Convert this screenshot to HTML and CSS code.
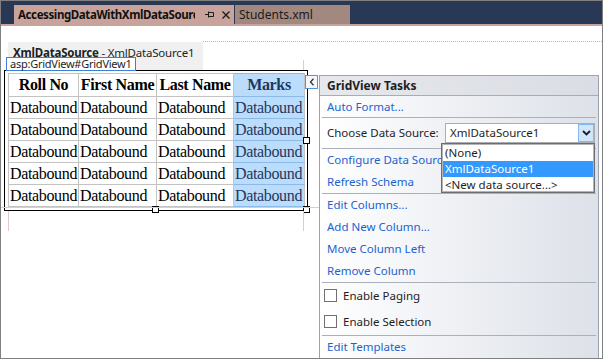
FILE: index.html
```html
<!DOCTYPE html>
<html>
<head>
<meta charset="utf-8">
<link rel="stylesheet" href="styles.css">
</head>
<body>
<div class="window">
  <div class="tabbar">
    <div class="tab tab-active">
      <span class="tab-title">AccessingDataWithXmlDataSource.aspx</span>
      <svg class="pin" width="9" height="7" viewBox="0 0 9 7"><path d="M0 3.5H3M3.5 0.5V6.5M3.5 1.5H8.5V5.5H3.5" fill="none" stroke="#1e1e1e" stroke-width="1"/></svg>
      <svg class="close" width="8" height="8" viewBox="0 0 8 8"><path d="M0.5 0.5L7.5 7.5M7.5 0.5L0.5 7.5" stroke="#1e1e1e" stroke-width="1.4"/></svg>
    </div>
    <div class="tab tab-inactive"><span>Students.xml</span></div>
  </div>
  <div class="tabline"></div>
  <div class="surface">
    <div class="dsrow">
      <div class="dsbox"><b>XmlDataSource</b> - XmlDataSource1</div>
      <div class="dsfill"></div>
    </div>
    <div class="gridframe">
      <table class="grid">
        <colgroup><col class="c1"><col class="c2"><col class="c3"><col class="c4"></colgroup>
        <tr class="head"><th>Roll No</th><th>First Name</th><th>Last Name</th><th class="sel">Marks</th></tr>
        <tr><td>Databound</td><td>Databound</td><td>Databound</td><td class="sel">Databound</td></tr>
        <tr><td>Databound</td><td>Databound</td><td>Databound</td><td class="sel">Databound</td></tr>
        <tr><td>Databound</td><td>Databound</td><td>Databound</td><td class="sel">Databound</td></tr>
        <tr><td>Databound</td><td>Databound</td><td>Databound</td><td class="sel">Databound</td></tr>
        <tr><td>Databound</td><td>Databound</td><td>Databound</td><td class="sel">Databound</td></tr>
      </table>
      <span class="handle h-bm"></span>
      <span class="handle h-br"></span>
      <span class="handle h-mr"></span>
    </div>
  </div>

  <div class="guide gh"></div>
  <div class="guide gv1"></div>
  <div class="guide gv2"></div>
  <div class="guide gv3"></div>

  <div class="gvlabel">asp:GridView#GridView1</div>

  <div class="smarttag">
    <svg width="6" height="8" viewBox="0 0 6 8"><path d="M4.5 0.8L1.5 4L4.5 7.2" fill="none" stroke="#333" stroke-width="1.3"/></svg>
  </div>

  <div class="tasks">
    <div class="tasks-head">GridView Tasks</div>
    <div class="row link">Auto Format...</div>
    <div class="sep"></div>
    <div class="row choose">
      <span>Choose Data Source:</span>
      <div class="combo">
        <span class="combo-text">XmlDataSource1</span>
        <span class="combo-btn"><svg width="9" height="6" viewBox="0 0 9 6"><path d="M1 1L4.5 4.5L8 1" fill="none" stroke="#1e1e1e" stroke-width="1.8"/></svg></span>
      </div>
    </div>
    <div class="sep"></div>
    <div class="row link">Configure Data Source...</div>
    <div class="row link">Refresh Schema</div>
    <div class="sep"></div>
    <div class="row link">Edit Columns...</div>
    <div class="row link">Add New Column...</div>
    <div class="row link">Move Column Left</div>
    <div class="row link">Remove Column</div>
    <div class="sep"></div>
    <div class="row check"><span class="box"></span>Enable Paging</div>
    <div class="row check"><span class="box"></span>Enable Selection</div>
    <div class="sep"></div>
    <div class="row link">Edit Templates</div>
  </div>

  <div class="ddlist">
    <div class="dd-item">(None)</div>
    <div class="dd-item dd-sel">XmlDataSource1</div>
    <div class="dd-item">&lt;New data source...&gt;</div>
  </div>
</div>
</body>
</html>
```
FILE: styles.css
```css
html, body {
  margin: 0;
  padding: 0;
  background: #fff;
}

.window {
  width: 603px;
  height: 359px;
  box-sizing: border-box;
  border: 1px solid #808080;
  position: relative;
  overflow: hidden;
  background: #fff;
  font-family: "Noto Sans", "Open Sans", sans-serif;
  font-size: 11.5px;
  color: #1e1e1e;
  display: flex;
  flex-direction: column;
}

/* ---------- tabs ---------- */
.tabbar {
  height: 23px;
  flex: none;
  background: #293955;
  display: flex;
  align-items: flex-end;
  padding-left: 13px;
  gap: 1px;
}

.tab {
  height: 19px;
  box-sizing: border-box;
  display: flex;
  align-items: center;
  padding-left: 4px;
  white-space: nowrap;
  font-size: 12px;
}

.tab-active {
  width: 220px;
  background: #c8a39b;
}

.tab-title {
  width: 177px;
  flex: none;
  overflow: hidden;
  font-weight: bold;
  font-size: 11.5px;
  letter-spacing: -0.4px;
  color: #111;
}

.pin {
  margin-left: 10px;
  flex: none;
}

.close {
  margin-left: 8px;
  flex: none;
}

.tab-inactive {
  width: 115px;
  background: #a2887f;
  color: #1b1b1b;
}

.tabline {
  height: 2px;
  flex: none;
  background: #c8a39b;
}

/* ---------- design surface ---------- */
.surface {
  flex: 1;
}

.dsrow {
  display: flex;
  align-items: flex-start;
  margin-top: 15px;
}

.dsbox {
  width: 195px;
  height: 28px;
  box-sizing: border-box;
  margin-left: 7px;
  margin-top: 1px;
  background: #f0f0f0;
  padding: 3px 0 0 5px;
  line-height: 16px;
  font-size: 11.5px;
  letter-spacing: -0.2px;
  white-space: nowrap;
  overflow: hidden;
}

.dsfill {
  flex: 1;
  border-top: 1px dotted #b8b8b8;
}

.gridframe {
  position: relative;
  width: 304px;
  box-sizing: border-box;
  margin-left: 3px;
  border: 1px solid #000;
  padding: 2px 3px 3px 3px;
}

.grid {
  border-collapse: collapse;
  table-layout: fixed;
  width: 296px;
  font-family: "Liberation Serif", "Times New Roman", serif;
  font-size: 16px;
  letter-spacing: -0.35px;
  color: #000;
}

.grid col.c1 { width: 70px; }
.grid col.c2 { width: 78px; }
.grid col.c3 { width: 77px; }
.grid col.c4 { width: 71px; }

.grid th,
.grid td {
  border: 1px solid #c3c3c3;
  padding: 0 0 0 1px;
  white-space: nowrap;
  overflow: hidden;
  line-height: 18px;
}

.grid tr {
  height: 22px;
}

.grid tr.head {
  height: 23px;
}

.grid th {
  font-weight: bold;
  text-align: center;
  padding: 0;
}

.grid td {
  text-align: left;
}

.grid .sel {
  background: #bcdcfb;
  color: #1d3760;
  border-top-color: #8ab9ec;
  border-bottom-color: #8ab9ec;
}

.handle {
  position: absolute;
  width: 7px;
  height: 7px;
  box-sizing: border-box;
  border: 1px solid #000;
  background: #fff;
}

.h-bm { left: 147px; top: 135px; }
.h-br { left: 298px; top: 135px; }
.h-mr { left: 298px; top: 66px; }

/* guide lines */
.guide {
  position: absolute;
  background: #e3caca;
}

.gh { left: 0; top: 206px; width: 318px; height: 1px; }
.gv1 { left: 7px; top: 210px; width: 1px; height: 20px; }
.gv2 { left: 302px; top: 210px; width: 1px; height: 20px; }
.gv3 { left: 302px; top: 59px; width: 1px; height: 10px; }

.gvlabel {
  position: absolute;
  left: 5px;
  top: 56px;
  width: 130px;
  height: 14px;
  box-sizing: border-box;
  border: 1px solid #3c7fd5;
  background: #fff;
  padding: 0 0 0 3px;
  font-size: 11px;
  letter-spacing: -0.25px;
  line-height: 12px;
  white-space: nowrap;
  color: #1e1e1e;
}

.smarttag {
  position: absolute;
  left: 304px;
  top: 74px;
  width: 13px;
  height: 14px;
  box-sizing: border-box;
  border: 1px solid #5e92d8;
  background: #f4f7fb;
  display: flex;
  align-items: center;
  justify-content: center;
}

/* ---------- tasks panel ---------- */
.tasks {
  position: absolute;
  left: 318px;
  top: 74px;
  width: 280px;
  height: 300px;
  box-sizing: border-box;
  border: 1px solid #9ba3b1;
  background: linear-gradient(to right, #ffffff 0%, #eef0f4 50%, #dde1e8 100%);
}

.tasks-head {
  height: 20px;
  box-sizing: border-box;
  border-bottom: 1px solid #a6adb9;
  background: linear-gradient(to right, #e6e8ec, #dadde4);
  padding-left: 7px;
  line-height: 19px;
  font-weight: bold;
  font-size: 12px;
  color: #1e1e1e;
}

.row {
  height: 22px;
  display: flex;
  align-items: center;
  padding-left: 7px;
  white-space: nowrap;
  padding-bottom: 1px;
  box-sizing: border-box;
}

.tasks-head + .row {
  height: 21px;
}

.link {
  color: #1c62d0;
}

.sep {
  height: 1px;
  margin: 0 2px;
  background: #aab1bd;
}

.choose {
  height: 30px;
  color: #1e1e1e;
}

.combo {
  margin-left: auto;
  margin-right: 3px;
  width: 150px;
  height: 20px;
  box-sizing: border-box;
  border: 1px solid #abadb3;
  background: #fff;
  display: flex;
  align-items: center;
}

.combo-text {
  flex: 1;
  padding-left: 4px;
}

.combo-btn {
  width: 16px;
  height: 18px;
  box-sizing: border-box;
  border: 1px solid #86b8ec;
  background: #cfe5fa;
  display: flex;
  align-items: center;
  justify-content: center;
}

.check {
  height: 26px;
  padding-left: 4px;
  padding-bottom: 2px;
  color: #1e1e1e;
}

.box {
  width: 13px;
  height: 13px;
  box-sizing: border-box;
  border: 1px solid #707070;
  background: #fff;
  margin-right: 6px;
}

/* ---------- dropdown list ---------- */
.ddlist {
  position: absolute;
  left: 440px;
  top: 142px;
  width: 154px;
  height: 50px;
  box-sizing: border-box;
  border: 1px solid #6d6d6d;
  box-shadow: inset 0 0 0 1px #b4b4b4;
  background: #fff;
  padding: 1px;
}

.dd-item {
  height: 16px;
  line-height: 16px;
  padding-left: 2px;
  white-space: nowrap;
  color: #1e1e1e;
}

.dd-sel {
  background: #3399ff;
  color: #fff;
}
```
